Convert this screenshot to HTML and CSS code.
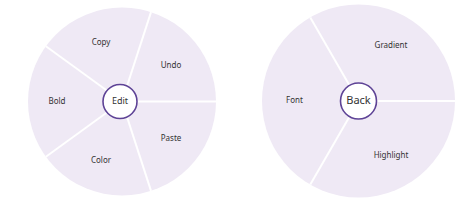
FILE: index.html
```html
<!DOCTYPE html>
<html lang="en">
<head>
    <meta charset="UTF-8">
    <title>Radial Menu</title>
    <link rel="stylesheet" href="styles.css">
</head>
<body>
    <div class="menus">
        <!-- edit menu, five slices -->
        <svg class="radial" width="237" height="201" viewBox="0 0 237 201">
            <circle class="disc" cx="122" cy="101.5" r="94"/>
            <g class="cuts">
                <line x1="122" y1="101.5" x2="216" y2="101.5"/>
                <line x1="122" y1="101.5" x2="151" y2="12.1"/>
                <line x1="122" y1="101.5" x2="45.9" y2="46.2"/>
                <line x1="122" y1="101.5" x2="45.9" y2="156.8"/>
                <line x1="122" y1="101.5" x2="151" y2="190.9"/>
            </g>
            <g class="labels">
                <text x="171" y="66">Undo</text>
                <text x="101" y="43">Copy</text>
                <text x="57" y="102">Bold</text>
                <text x="101" y="161">Color</text>
                <text x="171" y="139">Paste</text>
            </g>
            <circle class="hub" cx="120" cy="101.5" r="17"/>
            <text class="hub-label" x="120" y="102">Edit</text>
        </svg>

        <!-- back menu, three slices -->
        <svg class="radial" width="237" height="201" viewBox="0 0 237 201">
            <circle class="disc" cx="121.5" cy="101" r="96.5"/>
            <g class="cuts">
                <line x1="121.5" y1="101" x2="218" y2="101"/>
                <line x1="121.5" y1="101" x2="73.3" y2="17.4"/>
                <line x1="121.5" y1="101" x2="73.3" y2="184.6"/>
            </g>
            <g class="labels">
                <text x="154" y="46">Gradient</text>
                <text x="57.5" y="101">Font</text>
                <text x="154" y="156">Highlight</text>
            </g>
            <circle class="hub" cx="121.5" cy="101" r="18"/>
            <text class="hub-label big" x="121.5" y="101.5">Back</text>
        </svg>
    </div>
</body>
</html>
```

FILE: styles.css
```css
body {
    margin: 0;
    background-color: #ffffff;
    font-family: "Noto Sans", "Open Sans", sans-serif;
}
.menus {
    display: flex;
    width: 474px;
    height: 201px;
}
.radial {
    display: block;
}
.disc {
    fill: #efe9f5;
}
.cuts line {
    stroke: #ffffff;
    stroke-width: 2;
}
.labels text {
    font-size: 8px;
    fill: #333333;
    text-anchor: middle;
    dominant-baseline: middle;
}
.hub {
    fill: #ffffff;
    stroke: #5e4396;
    stroke-width: 1.6;
}
.hub-label {
    font-size: 9px;
    fill: #333333;
    text-anchor: middle;
    dominant-baseline: middle;
}
.hub-label.big {
    font-size: 11px;
}
```
